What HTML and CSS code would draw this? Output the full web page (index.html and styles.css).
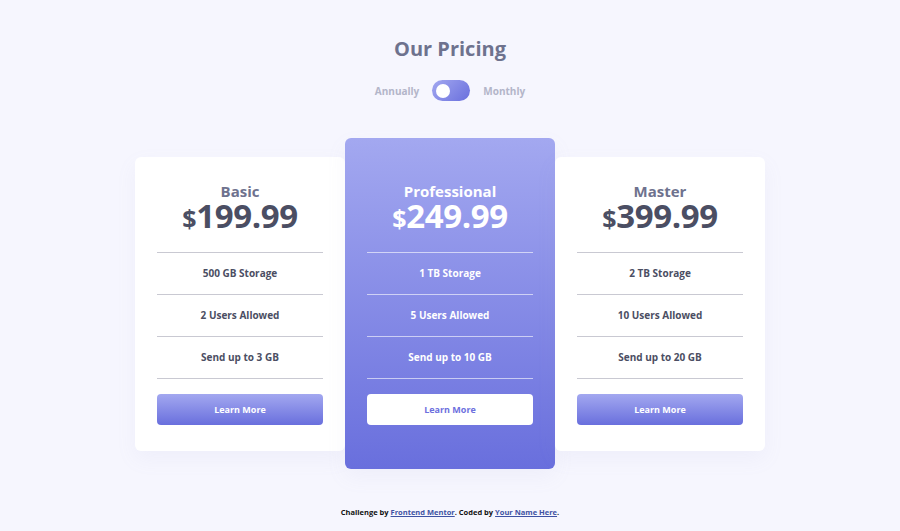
FILE: index.html
```html
<!DOCTYPE html>
<html lang="en">
<head>
  <meta charset="UTF-8" />
  <meta name="viewport" content="width=device-width, initial-scale=1.0"/>
  <title>Pricing component</title>
  <link rel="stylesheet" href="styles.css">
</head>
<body>
  <main class="pricing">
    <h1 class="title">Our Pricing</h1>

    <div class="switch">
      <span>Annually</span>
      <span class="toggle"><span class="knob"></span></span>
      <span>Monthly</span>
    </div>

    <div class="plans">
      <section class="plan">
        <h2>Basic</h2>
        <p class="price"><span class="dollar">$</span>199.99</p>
        <ul>
          <li>500 GB Storage</li>
          <li>2 Users Allowed</li>
          <li>Send up to 3 GB</li>
        </ul>
        <button>Learn More</button>
      </section>

      <section class="plan featured">
        <h2>Professional</h2>
        <p class="price"><span class="dollar">$</span>249.99</p>
        <ul>
          <li>1 TB Storage</li>
          <li>5 Users Allowed</li>
          <li>Send up to 10 GB</li>
        </ul>
        <button>Learn More</button>
      </section>

      <section class="plan">
        <h2>Master</h2>
        <p class="price"><span class="dollar">$</span>399.99</p>
        <ul>
          <li>2 TB Storage</li>
          <li>10 Users Allowed</li>
          <li>Send up to 20 GB</li>
        </ul>
        <button>Learn More</button>
      </section>
    </div>
  </main>

  <footer class="attribution">
    Challenge by <a href="#">Frontend Mentor</a>. Coded by <a href="#">Your Name Here</a>.
  </footer>
</body>
</html>
```

FILE: styles.css
```css
* {
  box-sizing: border-box;
}

body {
  margin: 0;
  background: #f6f6fe;
  font-family: "Open Sans", sans-serif;
  color: #4b4e63;
}

.pricing {
  display: flex;
  flex-direction: column;
  align-items: center;
  padding-top: 36px;
}

.title {
  margin: 0;
  font-size: 20px;
  line-height: 26px;
  font-weight: 700;
  color: #6e728e;
}

.switch {
  display: flex;
  align-items: center;
  gap: 13px;
  margin-top: 18px;
  font-size: 10px;
  font-weight: 700;
  color: #b3b5c9;
}

.toggle {
  display: flex;
  align-items: center;
  width: 38px;
  height: 21px;
  padding: 0 4px;
  border-radius: 11px;
  background: linear-gradient(135deg, #a3a8f0, #696fdd);
}

.knob {
  width: 14px;
  height: 14px;
  border-radius: 50%;
  background: #fff;
}

.plans {
  display: flex;
  align-items: center;
  margin-top: 37px;
}

.plan {
  width: 210px;
  padding: 22px 22px 26px;
  background: #fff;
  border-radius: 6px;
  text-align: center;
  box-shadow: 0 8px 20px rgba(150, 155, 200, 0.08);
}

.plan h2 {
  margin: 3px 0 0;
  font-size: 15px;
  line-height: 18px;
  font-weight: 700;
  color: #6e728e;
}

.price {
  margin: 0;
  font-size: 33px;
  line-height: 32px;
  font-weight: 700;
  color: #4b4e63;
  letter-spacing: -0.4px;
}

.dollar {
  font-size: 25px;
}

.plan ul {
  list-style: none;
  margin: 18px 0 0;
  padding: 0;
  border-top: 1px solid #c9c9d2;
}

.plan li {
  height: 42px;
  line-height: 41px;
  border-bottom: 1px solid #c9c9d2;
  font-size: 10px;
  font-weight: 700;
}

.plan button {
  display: block;
  width: 100%;
  height: 31px;
  margin-top: 15px;
  border: none;
  border-radius: 4px;
  background: linear-gradient(180deg, #a3a8f0, #696fdd);
  color: #fff;
  font-family: inherit;
  font-size: 9px;
  font-weight: 700;
  cursor: pointer;
}

.featured {
  padding-top: 41px;
  padding-bottom: 44px;
  background: linear-gradient(180deg, #a3a8f0, #696fdd);
  color: #fff;
}

.featured h2,
.featured .price {
  color: #fff;
}

.featured ul,
.featured li {
  border-color: rgba(255, 255, 255, 0.6);
}

.featured button {
  background: #fff;
  color: #6d70de;
}

.attribution {
  margin-top: 38px;
  text-align: center;
  font-size: 7.5px;
  font-weight: 700;
  color: #111;
}

.attribution a {
  color: #3e52a3;
}
```
